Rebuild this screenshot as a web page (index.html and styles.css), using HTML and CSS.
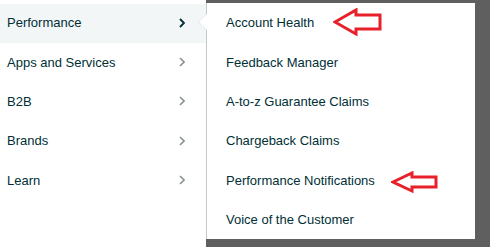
FILE: index.html
```html
<!DOCTYPE html>
<html>
<head>
  <link rel="stylesheet" href="styles.css">
</head>
<body>
  <div class="menu-wrap">
    <!-- Main navigation -->
    <ul class="main-menu">
      <li class="menu-item active">
        <span>Performance</span>
        <svg class="chev" viewBox="0 0 6 10"><path d="M1 1l4 4-4 4"/></svg>
      </li>
      <li class="menu-item">
        <span>Apps and Services</span>
        <svg class="chev" viewBox="0 0 6 10"><path d="M1 1l4 4-4 4"/></svg>
      </li>
      <li class="menu-item">
        <span>B2B</span>
        <svg class="chev" viewBox="0 0 6 10"><path d="M1 1l4 4-4 4"/></svg>
      </li>
      <li class="menu-item">
        <span>Brands</span>
        <svg class="chev" viewBox="0 0 6 10"><path d="M1 1l4 4-4 4"/></svg>
      </li>
      <li class="menu-item">
        <span>Learn</span>
        <svg class="chev" viewBox="0 0 6 10"><path d="M1 1l4 4-4 4"/></svg>
      </li>
    </ul>

    <!-- Flyout for the active item -->
    <div class="flyout-area">
      <div class="flyout">
        <span class="notch"></span>
        <ul class="sub-menu">
          <li class="sub-item">Account Health</li>
          <li class="sub-item">Feedback Manager</li>
          <li class="sub-item">A-to-z Guarantee Claims</li>
          <li class="sub-item">Chargeback Claims</li>
          <li class="sub-item">Performance Notifications</li>
          <li class="sub-item">Voice of the Customer</li>
        </ul>
      </div>
    </div>

    <!-- Annotation arrows -->
    <svg class="mark mark-1" width="50" height="30" viewBox="0 0 50 30">
      <path d="M2 14 L23 2 L23 7 L47 7 L47 21 L23 21 L23 26 Z"/>
    </svg>
    <svg class="mark mark-2" width="48" height="24" viewBox="0 0 48 24">
      <path d="M2 11 L21 2 L21 6 L45 6 L45 16 L21 16 L21 20 Z"/>
    </svg>
  </div>
</body>
</html>
```

FILE: styles.css
```css
body {
  margin: 0;
  background: #fff;
  font-family: "Liberation Sans", Arial, sans-serif;
  font-size: 13px;
  color: #002f36;
}

ul {
  list-style: none;
  margin: 0;
  padding: 0;
}

.menu-wrap {
  position: relative;
  display: flex;
  height: 247px;
}

.main-menu {
  width: 206px;
  padding-top: 4px;
  background: #fff;
}

.menu-item {
  height: 39.4px;
  box-sizing: border-box;
  display: flex;
  align-items: center;
  justify-content: space-between;
  padding: 0 21px 2px 7px;
}

.menu-item.active {
  background: #f3f6f6;
}

.chev {
  width: 6px;
  height: 10px;
  fill: none;
  stroke: #8a9292;
  stroke-width: 1.6;
}

.menu-item.active .chev {
  stroke: #002f36;
  stroke-width: 1.9;
}

.flyout-area {
  flex: 1;
  background: #5f5f5f;
  padding: 3px 15px 8px 0;
  display: flex;
}

.flyout {
  position: relative;
  flex: 1;
  background: #fff;
  border-left: 1px solid #c8c8c8;
  padding-top: 1px;
}

.notch {
  position: absolute;
  left: -8px;
  top: 11px;
  width: 0;
  height: 0;
  border-top: 8px solid transparent;
  border-bottom: 8px solid transparent;
  border-right: 8px solid #fff;
  filter: drop-shadow(-1px 0 0 #e3e7e7);
}

.sub-item {
  height: 39.4px;
  box-sizing: border-box;
  display: flex;
  align-items: center;
  padding: 0 0 2px 19px;
}

.mark {
  position: absolute;
}

.mark path {
  fill: #fff;
  stroke: #e8202a;
  stroke-width: 3;
  stroke-linejoin: miter;
}

.mark-1 {
  left: 333px;
  top: 8px;
}

.mark-2 {
  left: 391px;
  top: 171px;
}
```
